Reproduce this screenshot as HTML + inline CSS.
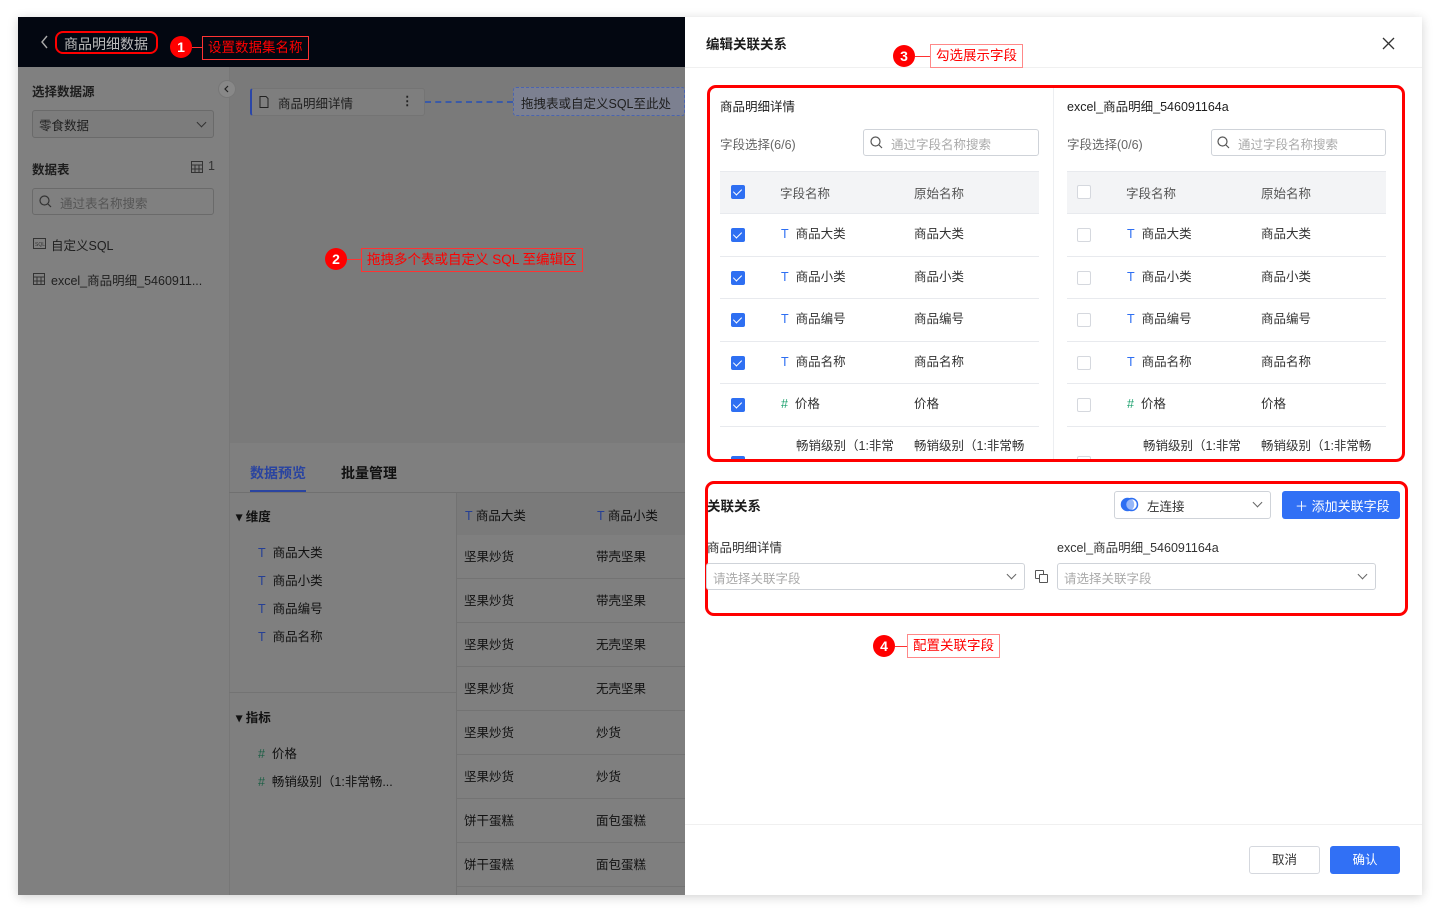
<!DOCTYPE html>
<html><head><meta charset="utf-8">
<style>
*{box-sizing:border-box;margin:0;padding:0}
body{width:1440px;height:913px;background:#fff;font-family:"Liberation Sans","Noto Sans CJK SC",sans-serif;font-size:12.5px;color:#333;position:relative;overflow:hidden}
.a{position:absolute}
.frame{left:18px;top:17px;width:1404px;height:878px;box-shadow:0 2px 10px rgba(0,0,0,.18);overflow:hidden}
.t{position:absolute;white-space:nowrap}
.circ{position:absolute;width:22px;height:22px;border-radius:50%;background:#f00;color:#fff;font-weight:bold;font-size:14px;text-align:center;line-height:22px}
.lbl{position:absolute;border:1px solid #f33;color:#f00;font-size:13.5px;padding:0 5px;line-height:22px;white-space:nowrap}
.cb{position:absolute;width:14px;height:14px;border-radius:2px}
.cb.on{background:#2e6ff2}
.cb.on:after{content:"";position:absolute;left:4px;top:1.5px;width:4px;height:7px;border:solid #fff;border-width:0 1.5px 1.5px 0;transform:rotate(45deg)}
.cb.off{border:1px solid #d5d8de;background:#fff}
.hl{position:absolute;height:1px;background:#e8eaee}
.T{color:#2e6ff2}
.H{color:#19a06c}
.inp{position:absolute;border:1px solid #cfd3d9;border-radius:3px;background:#fff;color:#aaa}
.chev{position:absolute;width:7px;height:7px;border:solid #666;border-width:0 1.3px 1.3px 0;transform:rotate(45deg)}
svg{position:absolute}
</style></head><body>
<div class="a frame">
 <div class="a" style="left:0;top:0;width:667px;height:50px;background:#030711"></div>
 <div class="a" style="left:0;top:50px;width:211px;height:828px;background:#808080"></div>
 <div class="a" style="left:211px;top:50px;width:456px;height:376px;background:#7a7a7a"></div>
 <div class="a" style="left:211px;top:426px;width:456px;height:452px;background:#7f7f7f"></div>
 <div class="a" style="left:211px;top:50px;width:1px;height:828px;background:#777"></div>
</div>
<svg style="left:40px;top:35px" width="10" height="14" viewBox="0 0 10 14"><path d="M7 1L2 7l5 6" fill="none" stroke="#aaa" stroke-width="1.4"/></svg>
<div class="a" style="left:55px;top:31px;width:103px;height:23px;border:2.5px solid #f00;border-radius:8px"></div>
<div class="t" style="left:64px;top:34px;color:#bbb;font-size:14px">商品明细数据</div>
<div class="circ" style="left:170px;top:36px">1</div>
<div class="a" style="left:192px;top:47px;width:10px;height:1px;background:#f33"></div>
<div class="lbl" style="left:202px;top:36px">设置数据集名称</div>
<div class="t" style="left:32px;top:81px;color:#1d1d1d;font-weight:bold">选择数据源</div>
<div class="a" style="left:218px;top:80px;width:18px;height:18px;border-radius:50%;background:#888;border:1px solid #777"></div>
<svg style="left:222px;top:84px" width="10" height="10" viewBox="0 0 10 10"><path d="M6 2L3 5l3 3" fill="none" stroke="#222" stroke-width="1.2"/></svg>
<div class="a" style="left:32px;top:110px;width:182px;height:28px;border:1px solid #6a6a6a;border-radius:3px;background:#7c7c7c"></div>
<div class="t" style="left:39px;top:115px;color:#1f1f1f">零食数据</div>
<div class="chev" style="left:198px;top:119px;border-color:#333"></div>
<div class="t" style="left:32px;top:159px;color:#1d1d1d;font-weight:bold">数据表</div>
<svg style="left:191px;top:161px" width="12" height="12" viewBox="0 0 12 12"><rect x=".5" y=".5" width="11" height="11" fill="none" stroke="#333"/><path d="M.5 4h11M.5 8h11M4 4v7.5M8 4v7.5" stroke="#333"/></svg>
<div class="t" style="left:208px;top:159px;color:#333">1</div>
<div class="a" style="left:32px;top:188px;width:182px;height:27px;border:1px solid #6a6a6a;border-radius:3px"></div>
<svg style="left:39px;top:195px" width="13" height="13" viewBox="0 0 13 13"><circle cx="5.5" cy="5.5" r="4.5" fill="none" stroke="#333" stroke-width="1.2"/><path d="M9 9l3 3" stroke="#333" stroke-width="1.2"/></svg>
<div class="t" style="left:60px;top:193px;color:#555">通过表名称搜索</div>
<svg style="left:33px;top:238px" width="13" height="11" viewBox="0 0 13 11"><rect x=".5" y=".5" width="12" height="10" fill="none" stroke="#333"/><text x="2" y="8" font-size="5" fill="#333" font-family="Liberation Sans">SQL</text></svg>
<div class="t" style="left:51px;top:235px;color:#1f1f1f">自定义SQL</div>
<svg style="left:33px;top:273px" width="12" height="12" viewBox="0 0 12 12"><rect x=".5" y=".5" width="11" height="11" fill="none" stroke="#333"/><path d="M.5 4h11M.5 8h11M4 4v7.5M8 4v7.5" stroke="#333"/></svg>
<div class="t" style="left:51px;top:270px;color:#1f1f1f">excel_商品明细_5460911...</div>
<div class="a" style="left:250px;top:88px;width:175px;height:28px;background:#7e7e7e;border:1px solid #747474;border-left:2px solid #2a46a8;border-radius:3px"></div>
<svg style="left:259px;top:96px" width="10" height="12" viewBox="0 0 10 12"><path d="M1 .5h6l2 2v9H1z" fill="none" stroke="#222"/></svg>
<div class="t" style="left:278px;top:93px;color:#1f1f1f">商品明细详情</div>
<div class="t" style="left:401px;top:93px;color:#222;font-weight:bold">⋮</div>
<div class="a" style="left:425px;top:101px;width:88px;border-top:2px dashed #3a5aa8"></div>
<div class="a" style="left:513px;top:87px;width:172px;height:29px;background:#7c8090;border:1px dashed #4a64b0;border-radius:3px"></div>
<div class="t" style="left:521px;top:93px;color:#1f1f1f">拖拽表或自定义SQL至此处</div>
<div class="circ" style="left:325px;top:248px">2</div>
<div class="a" style="left:347px;top:259px;width:14px;height:1px;background:#f33"></div>
<div class="lbl" style="left:361px;top:248px">拖拽多个表或自定义 SQL 至编辑区</div>
<div class="t" style="left:250px;top:463px;color:#2a44a0;font-size:14px;font-weight:bold">数据预览</div>
<div class="a" style="left:250px;top:490px;width:56px;height:3px;background:#2a44a0"></div>
<div class="t" style="left:341px;top:463px;color:#111;font-size:14px;font-weight:bold">批量管理</div>
<div class="a" style="left:229px;top:492px;width:456px;height:1px;background:#707070"></div>
<div class="a" style="left:456px;top:493px;width:1px;height:402px;background:#727272"></div>
<div class="a" style="left:457px;top:493px;width:228px;height:42px;background:#7a7a7a"></div>
<div class="a" style="left:229px;top:692px;width:227px;height:1px;background:#737373"></div>
<div class="t" style="left:236px;top:506px;color:#111;font-weight:bold">▾ 维度</div>
<div class="t" style="left:258px;top:542px;color:#111"><span style="color:#253f95">T</span>&nbsp; 商品大类</div>
<div class="t" style="left:258px;top:570px;color:#111"><span style="color:#253f95">T</span>&nbsp; 商品小类</div>
<div class="t" style="left:258px;top:598px;color:#111"><span style="color:#253f95">T</span>&nbsp; 商品编号</div>
<div class="t" style="left:258px;top:626px;color:#111"><span style="color:#253f95">T</span>&nbsp; 商品名称</div>
<div class="t" style="left:236px;top:707px;color:#111;font-weight:bold">▾ 指标</div>
<div class="t" style="left:258px;top:743px;color:#111"><span style="color:#1a5e44">#</span>&nbsp; 价格</div>
<div class="t" style="left:258px;top:771px;color:#111"><span style="color:#1a5e44">#</span>&nbsp; 畅销级别（1:非常畅...</div>
<div class="t" style="left:465px;top:505px;color:#111"><span style="color:#253f95">T</span> 商品大类</div>
<div class="t" style="left:597px;top:505px;color:#111"><span style="color:#253f95">T</span> 商品小类</div>
<div class="a" style="left:457px;top:535px;width:228px;height:360px;background:repeating-linear-gradient(#7f7f7f 0 43px,#737373 43px 44px)"></div>
<div class="t" style="left:464px;top:535px;color:#111;line-height:44px">坚果炒货<br>坚果炒货<br>坚果炒货<br>坚果炒货<br>坚果炒货<br>坚果炒货<br>饼干蛋糕<br>饼干蛋糕</div>
<div class="t" style="left:596px;top:535px;color:#111;line-height:44px">带壳坚果<br>带壳坚果<br>无壳坚果<br>无壳坚果<br>炒货<br>炒货<br>面包蛋糕<br>面包蛋糕</div>

<div class="a" style="left:685px;top:17px;width:737px;height:878px;background:#fff"></div>
<div class="t" style="left:706px;top:33px;color:#1d1d1d;font-size:13.5px;font-weight:bold">编辑关联关系</div>
<svg style="left:1382px;top:37px" width="13" height="13" viewBox="0 0 13 13"><path d="M1 1l11 11M12 1L1 12" stroke="#333" stroke-width="1.3"/></svg>
<div class="a" style="left:685px;top:67px;width:737px;height:1px;background:#f0f0f0"></div>
<div class="circ" style="left:893px;top:45px">3</div>
<div class="a" style="left:915px;top:56px;width:15px;height:1px;background:#f33"></div>
<div class="lbl" style="left:930px;top:44px;border-color:#f88">勾选展示字段</div>

<div class="a" style="left:1053px;top:88px;width:1px;height:371px;background:#eceef1"></div>
<div class="t" style="left:720px;top:96px;color:#1d1d1d">商品明细详情</div>
<div class="t" style="left:1067px;top:96px;color:#1d1d1d">excel_商品明细_546091164a</div>
<div class="t" style="left:720px;top:134px;color:#666">字段选择(6/6)</div>
<div class="t" style="left:1067px;top:134px;color:#666">字段选择(0/6)</div>
<div class="inp" style="left:863px;top:129px;width:176px;height:27px"></div>
<div class="inp" style="left:1211px;top:129px;width:175px;height:27px"></div>
<svg style="left:870px;top:136px" width="13" height="13" viewBox="0 0 13 13"><circle cx="5.5" cy="5.5" r="4.5" fill="none" stroke="#555" stroke-width="1.2"/><path d="M9 9l3 3" stroke="#555" stroke-width="1.2"/></svg>
<div class="t" style="left:891px;top:134px;color:#aaa">通过字段名称搜索</div>
<svg style="left:1217px;top:136px" width="13" height="13" viewBox="0 0 13 13"><circle cx="5.5" cy="5.5" r="4.5" fill="none" stroke="#555" stroke-width="1.2"/><path d="M9 9l3 3" stroke="#555" stroke-width="1.2"/></svg>
<div class="t" style="left:1238px;top:134px;color:#aaa">通过字段名称搜索</div>
<div class="a" style="left:720px;top:171px;width:319px;height:42px;background:#f3f4f6;border-top:1px solid #e8eaee"></div>
<div class="a" style="left:1067px;top:171px;width:319px;height:42px;background:#f3f4f6;border-top:1px solid #e8eaee"></div>
<div class="a" style="left:708px;top:88px;width:692px;height:370px;overflow:hidden">
 <div class="cb on" style="left:23px;top:97px"></div>
 <div class="t" style="left:72px;top:95px;color:#555">字段名称</div>
 <div class="t" style="left:206px;top:95px;color:#555">原始名称</div>
 <div class="cb off" style="left:369px;top:97px"></div>
 <div class="t" style="left:418px;top:95px;color:#555">字段名称</div>
 <div class="t" style="left:553px;top:95px;color:#555">原始名称</div>
</div>
<div class="a" style="left:708px;top:213px;width:692px;height:246px;overflow:hidden">
 <div class="hl" style="left:12px;top:0;width:319px"></div><div class="hl" style="left:359px;top:0;width:319px"></div>
 <div class="hl" style="left:12px;top:43px;width:319px"></div><div class="hl" style="left:359px;top:43px;width:319px"></div>
 <div class="hl" style="left:12px;top:85px;width:319px"></div><div class="hl" style="left:359px;top:85px;width:319px"></div>
 <div class="hl" style="left:12px;top:128px;width:319px"></div><div class="hl" style="left:359px;top:128px;width:319px"></div>
 <div class="hl" style="left:12px;top:170px;width:319px"></div><div class="hl" style="left:359px;top:170px;width:319px"></div>
 <div class="hl" style="left:12px;top:213px;width:319px"></div><div class="hl" style="left:359px;top:213px;width:319px"></div>
 <div class="cb on" style="left:23px;top:15px"></div><div class="cb on" style="left:23px;top:58px"></div><div class="cb on" style="left:23px;top:100px"></div><div class="cb on" style="left:23px;top:143px"></div><div class="cb on" style="left:23px;top:185px"></div><div class="cb on" style="left:23px;top:243px"></div>
 <div class="cb off" style="left:369px;top:15px"></div><div class="cb off" style="left:369px;top:58px"></div><div class="cb off" style="left:369px;top:100px"></div><div class="cb off" style="left:369px;top:143px"></div><div class="cb off" style="left:369px;top:185px"></div><div class="cb off" style="left:369px;top:243px"></div>
 <div class="t" style="left:73px;top:0;line-height:42.6px;color:#333"><span class="T">T</span>&nbsp; 商品大类<br><span class="T">T</span>&nbsp; 商品小类<br><span class="T">T</span>&nbsp; 商品编号<br><span class="T">T</span>&nbsp; 商品名称<br><span class="H">#</span>&nbsp; 价格</div>
 <div class="t" style="left:206px;top:0;line-height:42.6px;color:#333">商品大类<br>商品小类<br>商品编号<br>商品名称<br>价格</div>
 <div class="t" style="left:88px;top:222px;color:#333">畅销级别（1:非常</div>
 <div class="t" style="left:206px;top:222px;color:#333">畅销级别（1:非常畅</div>
 <div class="t" style="left:419px;top:0;line-height:42.6px;color:#333"><span class="T">T</span>&nbsp; 商品大类<br><span class="T">T</span>&nbsp; 商品小类<br><span class="T">T</span>&nbsp; 商品编号<br><span class="T">T</span>&nbsp; 商品名称<br><span class="H">#</span>&nbsp; 价格</div>
 <div class="t" style="left:553px;top:0;line-height:42.6px;color:#333">商品大类<br>商品小类<br>商品编号<br>商品名称<br>价格</div>
 <div class="t" style="left:435px;top:222px;color:#333">畅销级别（1:非常</div>
 <div class="t" style="left:553px;top:222px;color:#333">畅销级别（1:非常畅</div>
</div>
<div class="a" style="left:707px;top:85px;width:698px;height:377px;border:3px solid #f00;border-radius:9px"></div>

<div class="a" style="left:705px;top:481px;width:703px;height:135px;border:3px solid #f00;border-radius:9px"></div>
<div class="t" style="left:707px;top:495px;color:#1d1d1d;font-size:13.5px;font-weight:bold">关联关系</div>
<div class="inp" style="left:1114px;top:491px;width:157px;height:28px"></div>
<svg style="left:1120px;top:497px" width="20" height="15" viewBox="0 0 20 15"><circle cx="7.5" cy="7.5" r="6" fill="#2e6ff2" stroke="#2e6ff2" stroke-width="1.5"/><circle cx="11.5" cy="7.5" r="6" fill="#fff" fill-opacity=".5" stroke="#2e6ff2" stroke-width="1.5"/></svg>
<div class="t" style="left:1147px;top:496px;color:#333">左连接</div>
<div class="chev" style="left:1254px;top:499px"></div>
<div class="a" style="left:1282px;top:491px;width:118px;height:28px;border-radius:3px;background:#3170f5"></div>
<div class="t" style="left:1295px;top:496px;color:#fff;font-size:13px">＋ 添加关联字段</div>
<div class="t" style="left:707px;top:537px;color:#333">商品明细详情</div>
<div class="t" style="left:1057px;top:537px;color:#333">excel_商品明细_546091164a</div>
<div class="inp" style="left:706px;top:563px;width:319px;height:27px"></div>
<div class="t" style="left:713px;top:568px;color:#aaa">请选择关联字段</div>
<div class="chev" style="left:1008px;top:571px"></div>
<div class="a" style="left:1035px;top:570px;width:9px;height:9px;border:1.3px solid #555;border-radius:1px"></div>
<div class="a" style="left:1039px;top:574px;width:9px;height:9px;border:1.3px solid #555;border-radius:1px;background:#fff"></div>
<div class="inp" style="left:1057px;top:563px;width:319px;height:27px"></div>
<div class="t" style="left:1064px;top:568px;color:#aaa">请选择关联字段</div>
<div class="chev" style="left:1359px;top:571px"></div>
<div class="circ" style="left:873px;top:635px">4</div>
<div class="a" style="left:895px;top:646px;width:12px;height:1px;background:#f33"></div>
<div class="lbl" style="left:907px;top:634px;border-color:#f88">配置关联字段</div>

<div class="a" style="left:685px;top:824px;width:737px;height:1px;background:#f0f0f0"></div>
<div class="a" style="left:1249px;top:846px;width:71px;height:28px;border:1px solid #d5d8de;border-radius:3px;background:#fff;text-align:center;line-height:26px;color:#333">取消</div>
<div class="a" style="left:1330px;top:846px;width:70px;height:28px;border-radius:3px;background:#3170f5;text-align:center;line-height:28px;color:#fff">确认</div>
</body></html>
